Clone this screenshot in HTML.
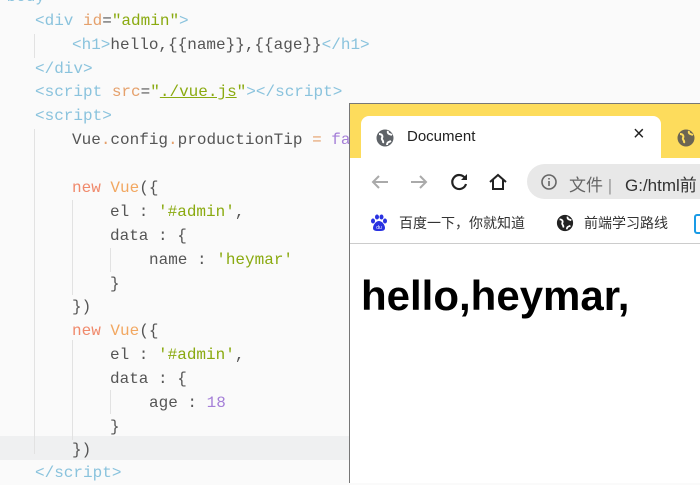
<!DOCTYPE html>
<html><head><meta charset="utf-8"><style>
body{margin:0;width:700px;height:482px;overflow:hidden;background:#fafafa;position:relative;font-family:"Liberation Mono",monospace;}
.l{position:absolute;left:0;height:24px;line-height:24px;font-size:16px;color:#555;white-space:pre;}
.t{color:#8ac3dd}.a{color:#e5a06b}.s{color:#8aaa10}.k{color:#f0896b}.v{color:#f2a760}.n{color:#a57fd8}.p{color:#e5a06b}
.g{position:absolute;width:1px;background:#e2e2e2}
#hl{position:absolute;left:0;top:436px;width:350px;height:24px;background:#eff0f1}
#br{position:absolute;left:349px;top:103px;width:351px;height:379px;background:#fff;border-left:1px solid #777;border-top:1px solid #777;font-family:"Liberation Sans","Noto Sans CJK SC",sans-serif}
</style></head><body>
<div id="hl"></div>
<div class="g" style="left:34px;top:34px;height:24px"></div>
<div class="g" style="left:34px;top:129px;height:325px"></div>
<div class="g" style="left:72px;top:200px;height:95px"></div>
<div class="g" style="left:72px;top:340px;height:100px"></div>
<div class="g" style="left:110px;top:248px;height:24px"></div>
<div class="g" style="left:110px;top:390px;height:24px"></div>
<div class="l" style="top:-15px;left:-3px"><span class="t">&lt;body&gt;</span></div>
<div class="l" style="top:9px;left:35px"><span class="t">&lt;div</span> <span class="a">id</span>=<span class="s">"admin"</span><span class="t">&gt;</span></div>
<div class="l" style="top:33px;left:72px"><span class="t">&lt;h1&gt;</span>hello,{{name}},{{age}}<span class="t">&lt;/h1&gt;</span></div>
<div class="l" style="top:57px;left:35px"><span class="t">&lt;/div&gt;</span></div>
<div class="l" style="top:80px;left:35px"><span class="t">&lt;script</span> <span class="a">src</span>=<span class="s">"<u style="text-decoration-color:#8aaa10">./vue.js</u>"</span><span class="t">&gt;&lt;/script&gt;</span></div>
<div class="l" style="top:104px;left:35px"><span class="t">&lt;script&gt;</span></div>
<div class="l" style="top:128px;left:72px">Vue<span class="p">.</span>config<span class="p">.</span>productionTip <span class="p">=</span> <span class="n">false</span></div>
<div class="l" style="top:176px;left:72px"><span class="k">new</span> <span class="v">Vue</span>({</div>
<div class="l" style="top:200px;left:110px">el : <span class="s">'#admin'</span>,</div>
<div class="l" style="top:224px;left:110px">data : {</div>
<div class="l" style="top:248px;left:149px">name : <span class="s">'heymar'</span></div>
<div class="l" style="top:272px;left:110px">}</div>
<div class="l" style="top:295px;left:72px">})</div>
<div class="l" style="top:319px;left:72px"><span class="k">new</span> <span class="v">Vue</span>({</div>
<div class="l" style="top:343px;left:110px">el : <span class="s">'#admin'</span>,</div>
<div class="l" style="top:367px;left:110px">data : {</div>
<div class="l" style="top:391px;left:149px">age : <span class="n">18</span></div>
<div class="l" style="top:415px;left:110px">}</div>
<div class="l" style="top:438px;left:72px">})</div>
<div class="l" style="top:461px;left:35px"><span class="t">&lt;/script&gt;</span></div>

<div id="br">
 <div style="position:absolute;left:0;top:0;width:351px;height:54px;background:#fddc5c"></div>
 <div style="position:absolute;left:11px;top:12px;width:300px;height:42px;background:#fff;border-radius:8px 8px 0 0"></div>
 <svg style="position:absolute;left:25px;top:24px" width="20" height="20" viewBox="0 0 20 20"><circle cx="10" cy="10" r="8.5" fill="#5f6368"/><path d="M4 6c3 0 4 2 3 4s2 2 1 5M13 3c-1 3 2 3 4 4M12 17c0-3 2-3 4-4" stroke="#fff" stroke-width="2" fill="none"/></svg>
 <div style="position:absolute;left:57px;top:24px;font-size:15px;color:#222">Document</div>
 <div style="position:absolute;left:283px;top:19px;font-size:20px;color:#222">×</div>
 <svg style="position:absolute;left:326px;top:24px" width="20" height="20" viewBox="0 0 20 20"><circle cx="10" cy="10" r="8.5" fill="#6b6553"/><path d="M4 6c3 0 4 2 3 4s2 2 1 5M13 3c-1 3 2 3 4 4" stroke="#fddc5c" stroke-width="2" fill="none"/></svg>
 <svg style="position:absolute;left:18px;top:66px" width="24" height="24" viewBox="0 0 24 24" fill="none" stroke-width="2"><path d="M20 12H5M11 6l-6 6 6 6" stroke="#aaa"/></svg>
 <svg style="position:absolute;left:57px;top:66px" width="24" height="24" viewBox="0 0 24 24" fill="none" stroke-width="2"><path d="M4 12h15M13 6l6 6-6 6" stroke="#aaa"/></svg>
 <svg style="position:absolute;left:97px;top:66px" width="24" height="24" viewBox="0 0 24 24"><path d="M18 8a7 7 0 1 0 1 6" fill="none" stroke="#222" stroke-width="2.2"/><path d="M20 4v6h-6z" fill="#222"/></svg>
 <svg style="position:absolute;left:136px;top:66px" width="24" height="24" viewBox="0 0 24 24" fill="none" stroke="#222" stroke-width="2"><path d="M4 12l8-7 8 7M7 10v9h10v-9"/></svg>
 <div style="position:absolute;left:177px;top:60px;width:200px;height:35px;background:#e8e8e8;border-radius:18px"></div>
 <svg style="position:absolute;left:190px;top:69px" width="18" height="18" viewBox="0 0 18 18" fill="none" stroke="#666" stroke-width="1.6"><circle cx="9" cy="9" r="7"/><path d="M9 8v5M9 5v1.5"/></svg>
 <div style="position:absolute;left:219px;top:67px;font-size:17px;color:#666">文件 <span style="color:#999">|</span></div>
 <div style="position:absolute;left:275px;top:67px;font-size:17px;color:#333;white-space:nowrap">G:/html前</div>
 <svg style="position:absolute;left:20px;top:110px" width="18" height="18" viewBox="0 0 18 18" fill="#2932e1"><ellipse cx="3" cy="7" rx="2" ry="2.5"/><ellipse cx="7" cy="3" rx="2" ry="2.5"/><ellipse cx="11.5" cy="3" rx="2" ry="2.5"/><ellipse cx="15" cy="7" rx="2" ry="2.5"/><path d="M9 7c-3 0-6 4-6 7 0 3 3 3 6 3s6 0 6-3c0-3-3-7-6-7z"/><text x="9" y="15" font-size="5" fill="#fff" text-anchor="middle" font-family="Liberation Sans">du</text></svg>
 <div style="position:absolute;left:49px;top:109px;font-size:14px;color:#333">百度一下，你就知道</div>
 <svg style="position:absolute;left:206px;top:110px" width="18" height="18" viewBox="0 0 20 20"><circle cx="10" cy="10" r="9" fill="#222"/><path d="M4 6c3 0 4 2 3 4s2 2 1 5M13 3c-1 3 2 3 4 4M12 17c0-3 2-3 4-4" stroke="#fff" stroke-width="2" fill="none"/></svg>
 <div style="position:absolute;left:234px;top:109px;font-size:14px;color:#333">前端学习路线</div>
 <div style="position:absolute;left:344px;top:110px;width:10px;height:16px;border:2px solid #1a9be6;border-radius:3px"></div>
 <div style="position:absolute;left:0;top:139px;width:351px;height:1px;background:#ccc"></div>
 <div style="position:absolute;left:11px;top:168px;font-size:42px;font-weight:bold;color:#000;letter-spacing:0px">hello,heymar,</div>
</div>
</body></html>
